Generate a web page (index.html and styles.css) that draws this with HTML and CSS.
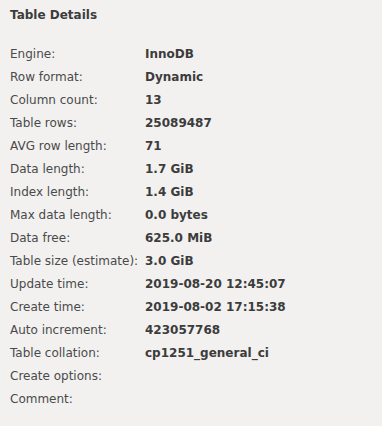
FILE: index.html
```html
<!DOCTYPE html>
<html lang="en">
<head>
  <meta charset="UTF-8" />
  <title>Table Details</title>
  <link rel="stylesheet" href="styles.css">
</head>
<body>
  <div class="panel">
    <div class="title">Table Details</div>
    <div class="details">
      <div class="label">Engine:</div><div class="value">InnoDB</div>
      <div class="label">Row format:</div><div class="value">Dynamic</div>
      <div class="label">Column count:</div><div class="value">13</div>
      <div class="label">Table rows:</div><div class="value">25089487</div>
      <div class="label">AVG row length:</div><div class="value">71</div>
      <div class="label">Data length:</div><div class="value">1.7 GiB</div>
      <div class="label">Index length:</div><div class="value">1.4 GiB</div>
      <div class="label">Max data length:</div><div class="value">0.0 bytes</div>
      <div class="label">Data free:</div><div class="value">625.0 MiB</div>
      <div class="label">Table size (estimate):</div><div class="value">3.0 GiB</div>
      <div class="label">Update time:</div><div class="value">2019-08-20 12:45:07</div>
      <div class="label">Create time:</div><div class="value">2019-08-02 17:15:38</div>
      <div class="label">Auto increment:</div><div class="value">423057768</div>
      <div class="label">Table collation:</div><div class="value">cp1251_general_ci</div>
      <div class="label">Create options:</div><div class="value"></div>
      <div class="label">Comment:</div><div class="value"></div>
    </div>
  </div>
</body>
</html>
```

FILE: styles.css
```css
:root {
  --bg: #f2f1f0;
  --text: #3c3c3c;
  --label: #4a4a4a;
}
* { box-sizing: border-box; }
html, body {
  margin: 0; padding: 0; height: 100%;
  background-color: var(--bg);
  font-family: 'DejaVu Sans', Verdana, sans-serif;
  font-size: 12px;
  color: var(--text);
}
.panel {
  padding: 4px 10px;
}
.title {
  font-weight: bold;
  line-height: 23px;
  margin-bottom: 15px;
}
.details {
  display: grid;
  grid-template-columns: 135px 1fr;
  grid-auto-rows: 23px;
  align-items: center;
}
.label { color: var(--label); }
.value { font-weight: bold; }
```
